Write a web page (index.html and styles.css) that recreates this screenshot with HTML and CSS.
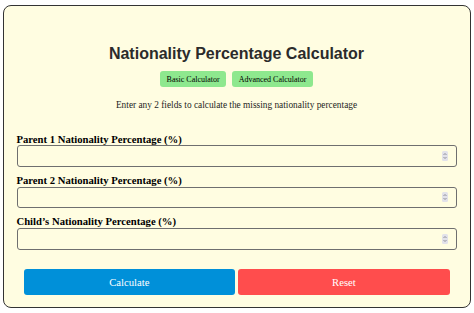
FILE: index.html
```html
<!DOCTYPE html>
<html lang="en">
<head>
<meta charset="utf-8">
<title>Nationality Percentage Calculator</title>
<link rel="stylesheet" href="styles.css">
</head>
<body>
<div class="card">
  <h1 class="title">Nationality Percentage Calculator</h1>
  <div class="modes">
    <button class="mode" type="button">Basic Calculator</button>
    <button class="mode" type="button">Advanced Calculator</button>
  </div>
  <p class="hint">Enter any 2 fields to calculate the missing nationality percentage</p>
  <form class="form">
    <div class="field">
      <label class="label" for="p1">Parent 1 Nationality Percentage (%)</label>
      <div class="input-wrap">
        <input class="input" id="p1" type="number">
        <span class="spin"><svg viewBox="0 0 6 10" width="6" height="10"><path d="M1.5 4 L3 2.5 L4.5 4 M1.5 6 L3 7.5 L4.5 6" fill="none" stroke="#7a7a85" stroke-width="0.8"/></svg></span>
      </div>
    </div>
    <div class="field">
      <label class="label" for="p2">Parent 2 Nationality Percentage (%)</label>
      <div class="input-wrap">
        <input class="input" id="p2" type="number">
        <span class="spin"><svg viewBox="0 0 6 10" width="6" height="10"><path d="M1.5 4 L3 2.5 L4.5 4 M1.5 6 L3 7.5 L4.5 6" fill="none" stroke="#7a7a85" stroke-width="0.8"/></svg></span>
      </div>
    </div>
    <div class="field">
      <label class="label" for="c">Child’s Nationality Percentage (%)</label>
      <div class="input-wrap">
        <input class="input" id="c" type="number">
        <span class="spin"><svg viewBox="0 0 6 10" width="6" height="10"><path d="M1.5 4 L3 2.5 L4.5 4 M1.5 6 L3 7.5 L4.5 6" fill="none" stroke="#7a7a85" stroke-width="0.8"/></svg></span>
      </div>
    </div>
    <div class="actions">
      <button class="btn btn-calc" type="button">Calculate</button>
      <button class="btn btn-reset" type="button">Reset</button>
    </div>
  </form>
</div>
</body>
</html>
```

FILE: styles.css
```css
html, body {
  margin: 0;
  background: #ffffff;
}
body {
  padding: 5px 3px 3px 3px;
}
.card {
  box-sizing: border-box;
  width: 468px;
  border: 1.5px solid #333333;
  border-radius: 8px;
  background: #fffde1;
  padding: 38.5px 13.5px 12.8px 12.5px;
}
.title {
  margin: 0;
  font-family: "Liberation Sans", Arial, sans-serif;
  font-weight: bold;
  font-size: 16px;
  line-height: 18.4px;
  text-align: center;
  color: #2b2b2b;
}
.modes {
  display: flex;
  justify-content: center;
  gap: 6px;
  margin-top: 8.5px;
}
.mode {
  border: none;
  border-radius: 3px;
  background: #8ee88e;
  color: #000000;
  font-family: "Liberation Serif", "Times New Roman", serif;
  font-size: 8px;
  line-height: 9.2px;
  padding: 3.4px 6.5px;
  margin: 0;
}
.hint {
  margin: 13.1px 0 0 0;
  font-family: "Liberation Serif", "Times New Roman", serif;
  font-size: 9.33px;
  line-height: 10.7px;
  text-align: center;
  color: #1e1e1e;
}
.form {
  margin-top: 21.6px;
}
.field {
  display: flex;
  flex-direction: column;
  margin-bottom: 7.1px;
}
.field:last-of-type {
  margin-bottom: 0;
}
.label {
  font-family: "Liberation Serif", "Times New Roman", serif;
  font-weight: bold;
  font-size: 10.67px;
  line-height: 12px;
  margin-bottom: 0.6px;
  color: #000000;
}
.input-wrap {
  position: relative;
}
.input {
  display: block;
  box-sizing: border-box;
  width: 100%;
  height: 21.6px;
  margin: 0;
  border: 1px solid #6f6f6f;
  border-radius: 3px;
  background: transparent;
  font-family: "Liberation Serif", "Times New Roman", serif;
  font-size: 10.67px;
  padding: 0 6px;
  -moz-appearance: textfield;
  appearance: textfield;
}
.input::-webkit-inner-spin-button,
.input::-webkit-outer-spin-button {
  -webkit-appearance: none;
  margin: 0;
}
.spin {
  position: absolute;
  right: 8.5px;
  top: 5.8px;
  width: 6px;
  height: 10px;
  background: #e2e2ea;
  border-radius: 1.5px;
  display: flex;
}
.actions {
  display: flex;
  gap: 3.3px;
  padding: 0 7px 0 7.3px;
  margin-top: 19.6px;
}
.btn {
  flex: 1;
  height: 25.4px;
  margin: 0;
  border: none;
  border-radius: 3px;
  color: #ffffff;
  font-family: "Liberation Serif", "Times New Roman", serif;
  font-size: 10.67px;
}
.btn-calc {
  background: #0090d9;
}
.btn-reset {
  background: #ff4d4d;
}
```
